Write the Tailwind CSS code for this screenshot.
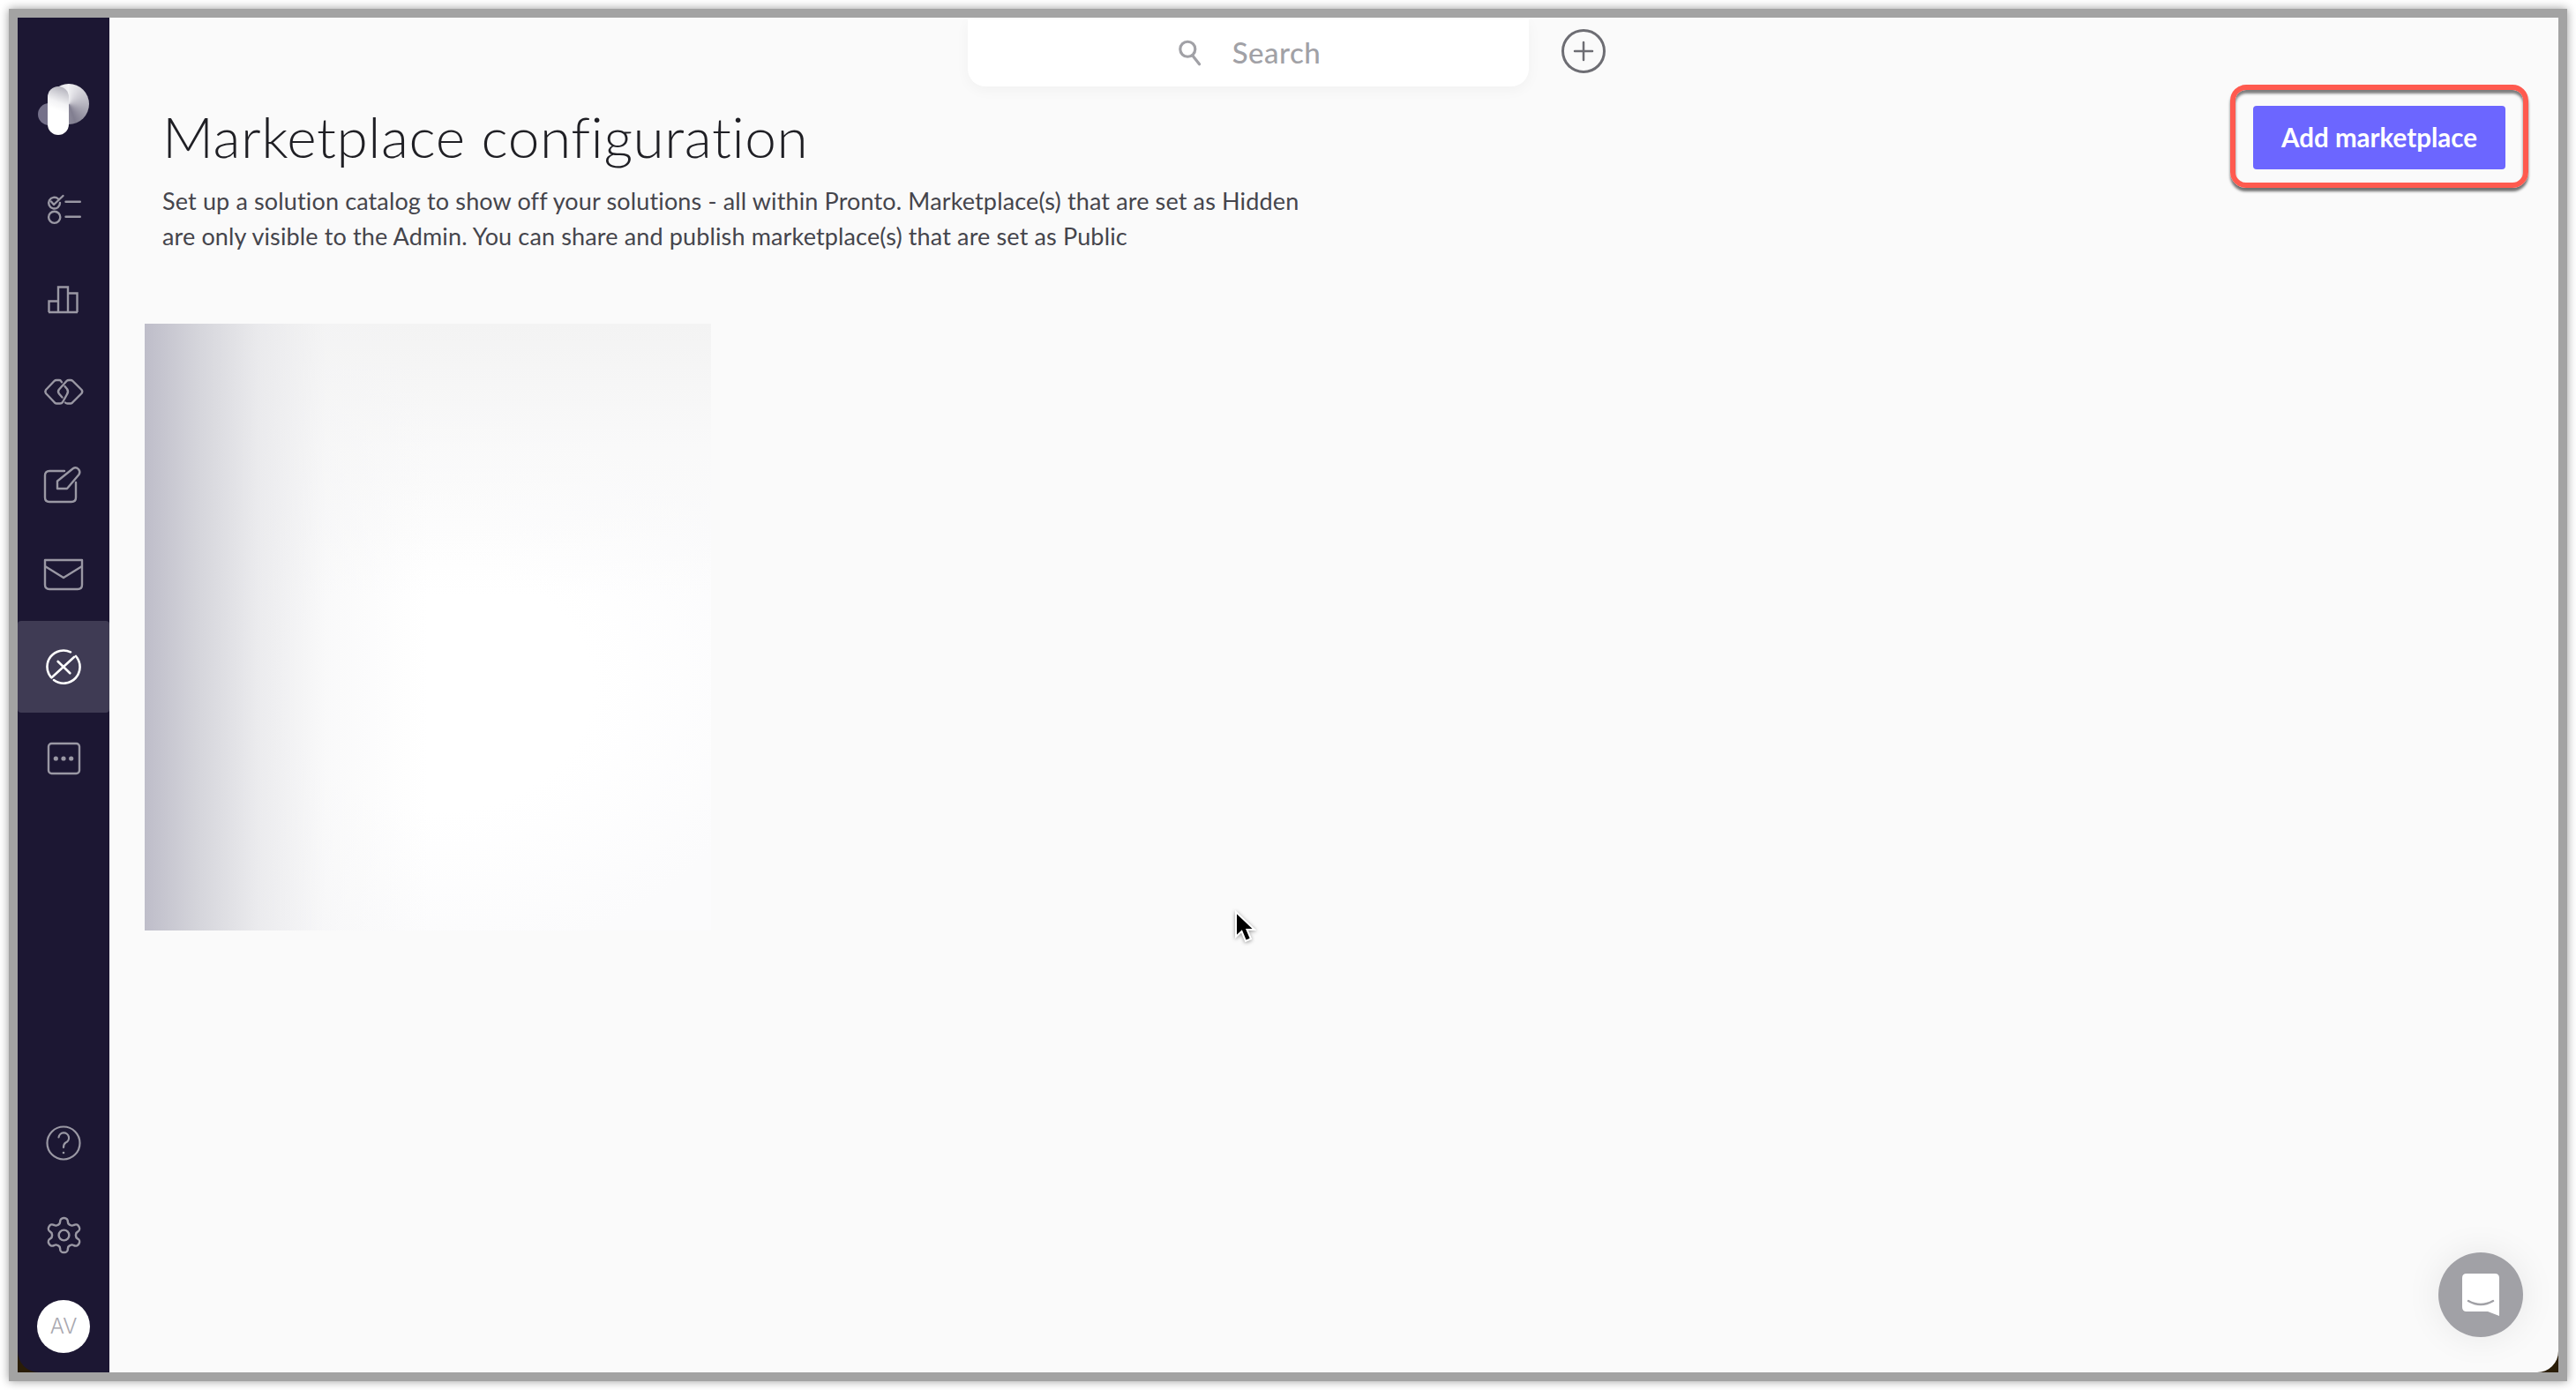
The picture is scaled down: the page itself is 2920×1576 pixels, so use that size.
<!DOCTYPE html>
<html lang="en">
<head>
    <meta charset="UTF-8">
    <title>Marketplace configuration</title>
    <script src="https://cdn.jsdelivr.net/npm/@tailwindcss/browser@4"></script>
</head>
<body class="bg-white font-['Lato',sans-serif]">
<div class="w-[2920px] h-[1576px] p-[10px] overflow-hidden">
    <!--Window frame-->
    <div class="w-[2900px] h-[1556px] p-[10px] bg-[#a3a3a3] shadow-[0_0_10px_rgba(0,0,0,0.4)]">
        <div class="flex w-[2880px] h-[1536px] bg-[#2a1d08]">
            <!--Sidebar-->
            <aside class="flex flex-col items-center w-[104px] h-full bg-[#1c1733] rounded-bl-[24px] pb-[22px]">
                <!--Logo-->
                <div class="relative w-full h-[164px] shrink-0">
                    <div class="absolute left-[23px] top-[97px] w-[25px] h-[25px] rounded-full bg-[#75718a]"></div>
                    <div class="absolute left-[35px] top-[75px] w-[46px] h-[46px] rounded-full bg-[conic-gradient(from_0deg,#efeff2,#b7b5c0_90deg,#817e90_160deg,#a09eac_220deg,#f4f4f6_360deg)]"></div>
                    <div class="absolute left-[34px] top-[78px] w-[24px] h-[55px] rounded-full bg-[linear-gradient(200deg,#a9a8b3_0%,#f3f3f5_35%,#ffffff_50%)]"></div>
                </div>
                <!--Nav-->
                <nav class="flex flex-col w-full">
                    <a class="flex items-center justify-center h-[104px]">
                        <svg class="w-[60px] h-[60px] text-[#9a98a4]" viewBox="0 0 60 60" fill="none" stroke="currentColor" stroke-width="2.4" stroke-linecap="round" stroke-linejoin="round">
                            <g transform="translate(0 2)">
                                <path d="M24 17.500A6.400 6.400 0 1 0 26 22"/>
                                <path d="M16 20.500L19 24L29.500 14"/>
                                <circle cx="19.700" cy="38.300" r="6.600"/>
                                <path d="M32.500 20.700H48.800M32.500 37.700H48.800"/>
                            </g>
                        </svg>
                    </a>
                    <a class="flex items-center justify-center h-[104px]">
                        <svg class="w-[60px] h-[60px] text-[#9a98a4]" viewBox="0 0 60 60" fill="none" stroke="currentColor" stroke-width="2.4">
                            <path d="M13.500 44V31.500H24M24 44V15.500H35V44M35 22.500H45.500V44M13 44H46"/>
                        </svg>
                    </a>
                    <a class="flex items-center justify-center h-[104px]">
                        <svg class="w-[60px] h-[60px] text-[#9a98a4]" viewBox="0 0 60 60" fill="none" stroke="currentColor" stroke-width="2.4" stroke-linecap="round" stroke-linejoin="round">
                            <path d="M28 19.300L27 17.800Q26.500 17 25 17H22Q20.500 17 19.500 18L10 28Q8.700 30 10 32L19.500 42Q20.500 43.500 22 43.500H26Q28 43.500 29 42L34 33Q36 30 34 27L31.500 24"/>
                            <path d="M32 42.500Q33 43.500 34.500 43.500H38Q39.500 43.500 40.500 42L50.500 32Q52 30 50.500 28L40.500 18Q39.500 17 38 17H36Q34.500 17 33.500 18L25 27.500Q23 30 25 32.500L28.500 36.500"/>
                        </svg>
                    </a>
                    <a class="flex items-center justify-center h-[104px]">
                        <svg class="w-[60px] h-[60px] text-[#9a98a4]" viewBox="0 0 60 60" fill="none" stroke="currentColor" stroke-width="2.4" stroke-linecap="round" stroke-linejoin="round">
                            <path d="M31 16H14Q9 16 9 21V46Q9 51 14 51H39Q44 51 44 46V29"/>
                            <path d="M23 36V27.500L41 13Q44 11 47 14Q49.500 17 47.500 20L34 36Z"/>
                        </svg>
                    </a>
                    <a class="flex items-center justify-center h-[104px]">
                        <svg class="w-[60px] h-[60px] text-[#9a98a4]" viewBox="0 0 60 60" fill="none" stroke="currentColor" stroke-width="2.4" stroke-linejoin="round">
                            <path d="M9 13H51V41Q51 46 46 46H14Q9 46 9 41Z"/>
                            <path d="M9 20L30 33L51 20"/>
                        </svg>
                    </a>
                    <a class="flex items-center justify-center h-[104px] bg-[#3f3b54] rounded-[4px]">
                        <svg class="w-[60px] h-[60px] text-white" viewBox="0 0 60 60" fill="none" stroke="currentColor" stroke-width="2.6" stroke-linecap="round">
                            <path d="M15.500 41.500A18.500 18.500 0 0 1 38 13.300"/>
                            <path d="M44 18A18.500 18.500 0 0 1 19 45"/>
                            <path d="M16.500 42.300L42 19M23.700 24L37.300 37.300"/>
                        </svg>
                    </a>
                    <a class="flex items-center justify-center h-[104px]">
                        <svg class="w-[60px] h-[60px] text-[#9a98a4]" viewBox="0 0 60 60" fill="none" stroke="currentColor" stroke-width="2.4">
                            <rect x="13" y="13" width="35" height="34" rx="3.500"/>
                            <circle cx="21.300" cy="30" r="2.600" fill="currentColor" stroke="none"/>
                            <circle cx="30" cy="30" r="2.600" fill="currentColor" stroke="none"/>
                            <circle cx="38.700" cy="30" r="2.600" fill="currentColor" stroke="none"/>
                        </svg>
                    </a>
                </nav>
                <!--Bottom-->
                <div class="flex flex-col items-center w-full mt-auto">
                    <a class="flex items-center justify-center w-full h-[104px]">
                        <svg class="w-[60px] h-[60px] text-[#9a98a4]" viewBox="0 0 60 60" fill="none" stroke="currentColor" stroke-width="2.200" stroke-linecap="round">
                            <circle cx="30" cy="30" r="18.500"/>
                            <path d="M24.500 23.500A5.800 5.800 0 1 1 32.500 29.500Q30 31 30 35"/>
                            <circle cx="30" cy="41" r="1.300" fill="currentColor" stroke="none"/>
                        </svg>
                    </a>
                    <a class="flex items-center justify-center w-full h-[104px]">
                        <svg class="w-[47px] h-[47px] text-[#9a98a4]" viewBox="0 0 24 24" fill="none" stroke="currentColor" stroke-width="1.250" stroke-linecap="round" stroke-linejoin="round">
                            <path d="M12.220 2h-.44a2 2 0 0 0-2 2v.18a2 2 0 0 1-1 1.730l-.43.25a2 2 0 0 1-2 0l-.15-.08a2 2 0 0 0-2.730.73l-.22.38a2 2 0 0 0 .73 2.730l.15.1a2 2 0 0 1 1 1.720v.51a2 2 0 0 1-1 1.740l-.15.09a2 2 0 0 0-.73 2.730l.22.38a2 2 0 0 0 2.730.73l.15-.08a2 2 0 0 1 2 0l.43.25a2 2 0 0 1 1 1.730V20a2 2 0 0 0 2 2h.44a2 2 0 0 0 2-2v-.18a2 2 0 0 1 1-1.730l.43-.25a2 2 0 0 1 2 0l.15.08a2 2 0 0 0 2.730-.73l.22-.39a2 2 0 0 0-.73-2.730l-.15-.08a2 2 0 0 1-1-1.740v-.5a2 2 0 0 1 1-1.740l.15-.09a2 2 0 0 0 .73-2.730l-.22-.38a2 2 0 0 0-2.730-.73l-.15.08a2 2 0 0 1-2 0l-.43-.25a2 2 0 0 1-1-1.730V4a2 2 0 0 0-2-2z"/>
                            <circle cx="12" cy="12" r="3"/>
                        </svg>
                    </a>
                    <div class="flex items-center justify-center w-[60px] h-[60px] mt-[22px] rounded-full bg-white text-[#a9a8b0] text-[24px] font-['Inter',sans-serif] font-light">AV</div>
                </div>
            </aside>

            <!--Main-->
            <main class="relative flex-1 h-full bg-[#fafafa] rounded-br-[24px] overflow-hidden">
                <!--Search row-->
                <div class="flex items-start mt-[2px] ml-[973px]">
                    <div class="flex items-center justify-center w-[636px] h-[76px] bg-white rounded-b-[20px] shadow-[0_4px_16px_rgba(0,0,0,0.04)]">
                        <svg class="w-[34px] h-[34px] text-[#a1a1a6]" viewBox="0 0 32 32" fill="none" stroke="currentColor" stroke-width="3">
                            <circle cx="12.500" cy="12" r="8"/>
                            <path d="M17.500 18.500L25 28" stroke-linecap="round"/>
                        </svg>
                        <span class="ml-[30px] text-[33px] tracking-[0.5px] font-medium text-[#a1a1a6]">Search</span>
                    </div>
                    <button class="flex items-center justify-center w-[50px] h-[50px] ml-[37px] mt-[11px] rounded-full border-[3px] border-[#6d6d73]">
                        <svg class="w-[26px] h-[26px] text-[#6d6d73]" viewBox="0 0 26 26" fill="none" stroke="currentColor" stroke-width="2.500" stroke-linecap="round">
                            <path d="M13 3V23M3 13H23"/>
                        </svg>
                    </button>
                </div>

                <!--Header-->
                <div class="flex items-start justify-between pl-[60px] pr-[60px]">
                    <div>
                        <h1 class="mt-[19px] text-[64px] leading-[76px] tracking-[0.55px] font-light text-[#1f1f24]">Marketplace configuration</h1>
                        <p class="mt-[15px] w-[1300px] text-[27px] leading-[40px] tracking-[0.14px] text-[#45454c]">Set up a solution catalog to show off your solutions - all within Pronto. Marketplace(s) that are set as Hidden are only visible to the Admin. You can share and publish marketplace(s) that are set as Public</p>
                    </div>
                    <div class="relative mt-[22px]">
                        <button class="w-[286px] h-[72px] rounded-[4px] bg-[#6c66ff] text-white text-[29.5px] font-bold">Add marketplace</button>
                        <!--Red annotation-->
                        <div class="absolute -left-[26px] -right-[26px] -top-[24px] -bottom-[21px] rounded-[18px] border-[6px] border-[#ff5a4f] shadow-[0_4px_3px_rgba(0,0,0,0.55),inset_0_4px_3px_rgba(0,0,0,0.5)]"></div>
                    </div>
                </div>

                <!--Loading placeholder-->
                <div class="mt-[79px] ml-[40px] w-[642px] h-[688px] bg-[linear-gradient(90deg,#bebdc9_0%,#d6d6dc_10%,rgba(232,232,235,0.85)_20%,rgba(244,244,245,0.5)_32%,rgba(250,250,250,0)_50%),linear-gradient(180deg,#f3f3f3_0%,rgba(248,248,248,0.7)_20%,rgba(255,255,255,0)_45%),radial-gradient(ellipse_60%_45%_at_52%_60%,#ffffff_0%,#ffffff_45%,#fbfbfc_100%)]"></div>

                <!--Cursor-->
                <svg class="absolute left-[1274px] top-[1012px] w-[26px] h-[40px] drop-shadow-[0_1px_2px_rgba(0,0,0,0.4)]" viewBox="0 0 26 40">
                    <path d="M3 2V30L9.500 24L14 35L20 32.500L15.500 22H24Z" fill="#000" stroke="#fff" stroke-width="2"/>
                </svg>

                <!--Chat-->
                <button class="absolute left-[2640px] top-[1400px] flex items-center justify-center w-[96px] h-[96px] rounded-full bg-[#a1a1a6] shadow-[0_0_40px_rgba(0,0,0,0.08)]">
                    <svg class="w-[42px] h-[48px]" viewBox="0 0 42 48">
                        <path d="M5 0H37Q42 0 42 5V48L29 43H5Q0 43 0 38V5Q0 0 5 0Z" fill="#fff"/>
                        <path d="M7 31Q21 39 35 31" fill="none" stroke="#a1a1a6" stroke-width="2.500" stroke-linecap="round"/>
                    </svg>
                </button>
            </main>
        </div>
    </div>
</div>
</body>
</html>
